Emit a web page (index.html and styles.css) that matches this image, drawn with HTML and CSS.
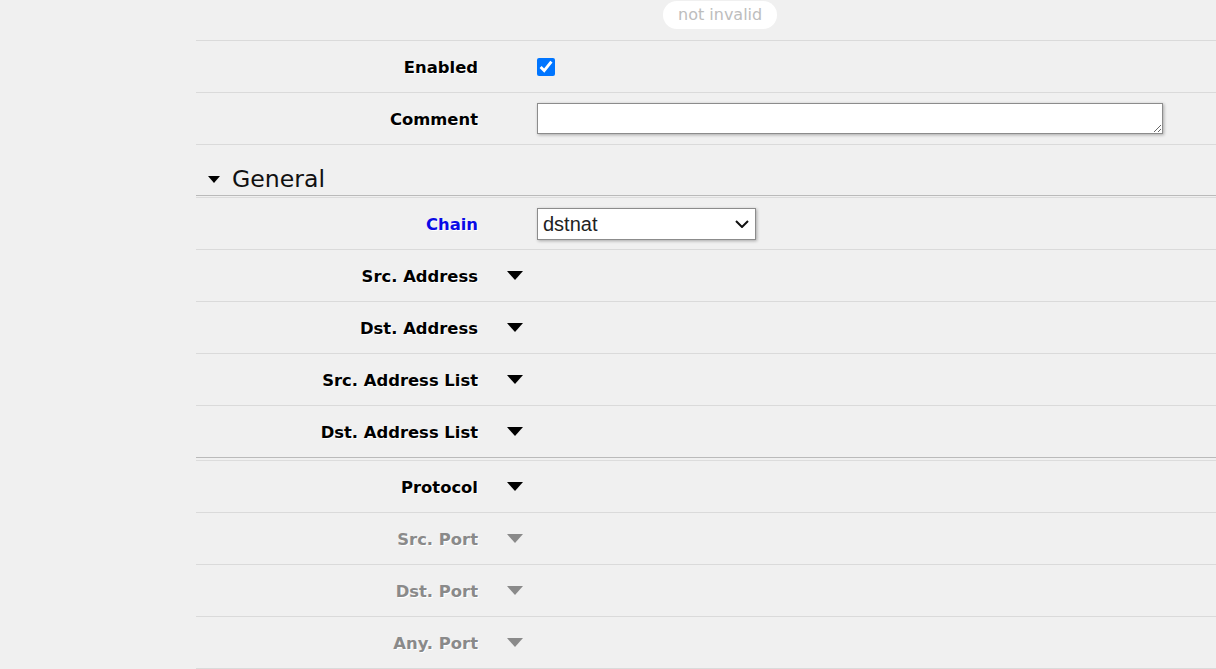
FILE: index.html
```html
<!DOCTYPE html>
<html lang="en">
<head>
  <meta charset="UTF-8" />
  <title>NAT Rule</title>
  <meta name="viewport" content="width=device-width, initial-scale=1.0" />
  <link rel="stylesheet" href="styles.css">
</head>
<body>

  <div class="form">

    <div class="row">
      <div class="label"></div>
      <div class="toggle"></div>
      <div class="value"><span class="status">not invalid</span></div>
    </div>

    <div class="row">
      <div class="label">Enabled</div>
      <div class="toggle"></div>
      <div class="value"><input type="checkbox" class="check" checked /></div>
    </div>

    <div class="row">
      <div class="label">Comment</div>
      <div class="toggle"></div>
      <div class="value"><textarea class="comment"></textarea></div>
    </div>

    <!-- General -->
    <div class="section-head">
      <span class="head-arrow"></span>
      General
    </div>
    <div class="divider"></div>

    <div class="row">
      <div class="label required">Chain</div>
      <div class="toggle"></div>
      <div class="value">
        <div class="select-wrap">
          <select class="select">
            <option>dstnat</option>
            <option>srcnat</option>
          </select>
          <svg class="chevron" width="14" height="8" viewBox="0 0 14 8">
            <path d="M1 1 L7 7 L13 1" fill="none" stroke="#111" stroke-width="2" />
          </svg>
        </div>
      </div>
    </div>

    <div class="row">
      <div class="label">Src. Address</div>
      <div class="toggle"><span class="arrow"></span></div>
      <div class="value"></div>
    </div>

    <div class="row">
      <div class="label">Dst. Address</div>
      <div class="toggle"><span class="arrow"></span></div>
      <div class="value"></div>
    </div>

    <div class="row">
      <div class="label">Src. Address List</div>
      <div class="toggle"><span class="arrow"></span></div>
      <div class="value"></div>
    </div>

    <div class="row last">
      <div class="label">Dst. Address List</div>
      <div class="toggle"><span class="arrow"></span></div>
      <div class="value"></div>
    </div>

    <div class="divider wide"></div>

    <div class="row">
      <div class="label">Protocol</div>
      <div class="toggle"><span class="arrow"></span></div>
      <div class="value"></div>
    </div>

    <div class="row">
      <div class="label disabled">Src. Port</div>
      <div class="toggle"><span class="arrow disabled"></span></div>
      <div class="value"></div>
    </div>

    <div class="row">
      <div class="label disabled">Dst. Port</div>
      <div class="toggle"><span class="arrow disabled"></span></div>
      <div class="value"></div>
    </div>

    <div class="row">
      <div class="label disabled">Any. Port</div>
      <div class="toggle"><span class="arrow disabled"></span></div>
      <div class="value"></div>
    </div>

  </div>

</body>
</html>
```

FILE: styles.css
```css
body {
  margin: 0;
  background: #f0f0f0;
  font-family: 'DejaVu Sans', Verdana, sans-serif;
  overflow: hidden;
}

.form {
  margin: -11px 0 0 196px;
}

.row {
  display: grid;
  grid-template-columns: 282px 59px 1fr;
  align-items: center;
  height: 51px;
  border-bottom: 1px solid #dadada;
}

.row.last {
  border-bottom: none;
}

.label {
  padding-top: 1px;
  text-align: right;
  font-weight: bold;
  font-size: 16.4px;
  color: #000;
  text-shadow: 1px 1px 0 #fff;
}

.label.required {
  color: #0a0ae6;
}

.label.disabled {
  color: #8a8a8a;
}

.toggle {
  padding-left: 29px;
}

.arrow {
  display: block;
  width: 0;
  height: 0;
  border-left: 8px solid transparent;
  border-right: 8px solid transparent;
  border-top: 9px solid #000;
}

.arrow.disabled {
  border-top-color: #8a8a8a;
}

.status {
  display: inline-block;
  margin-left: 126px;
  padding: 3px 15px;
  line-height: 22px;
  border-radius: 14px;
  background: #fff;
  color: #bdbdbd;
  font-size: 16px;
}

.check {
  display: block;
  width: 18px;
  height: 18px;
  margin: 0;
  accent-color: #0075ff;
}

.comment {
  display: block;
  box-sizing: border-box;
  width: 626px;
  height: 31px;
  margin: 0;
  padding: 2px 4px;
  border: 1px solid #8c8c8c;
  background: #fff;
  box-shadow: 1px 1px 3px rgba(0,0,0,0.3);
  font: 16px 'Liberation Sans', Arial, sans-serif;
}

.section-head {
  display: flex;
  align-items: center;
  gap: 12px;
  height: 28px;
  padding: 20px 0 2px 12px;
  font-size: 23.6px;
  line-height: 28px;
  color: #111;
}

.head-arrow {
  width: 0;
  height: 0;
  border-left: 6.5px solid transparent;
  border-right: 6.5px solid transparent;
  border-top: 7px solid #000;
}

.divider {
  height: 1px;
  border-top: 1px solid #bababa;
  border-bottom: 1px solid #dcdcdc;
}

.divider.wide {
  height: 2px;
}

.select-wrap {
  position: relative;
  width: 219px;
}

.select {
  display: block;
  box-sizing: border-box;
  width: 100%;
  height: 32px;
  margin: 0;
  padding: 0 0 0 5px;
  border: 1px solid #8c8c8c;
  border-radius: 0;
  background: #fff;
  color: #222;
  font: 20px 'Liberation Sans', Arial, sans-serif;
  appearance: none;
  box-shadow: 1px 1px 3px rgba(0,0,0,0.3);
}

.chevron {
  position: absolute;
  right: 7px;
  top: 12px;
  pointer-events: none;
}
```
